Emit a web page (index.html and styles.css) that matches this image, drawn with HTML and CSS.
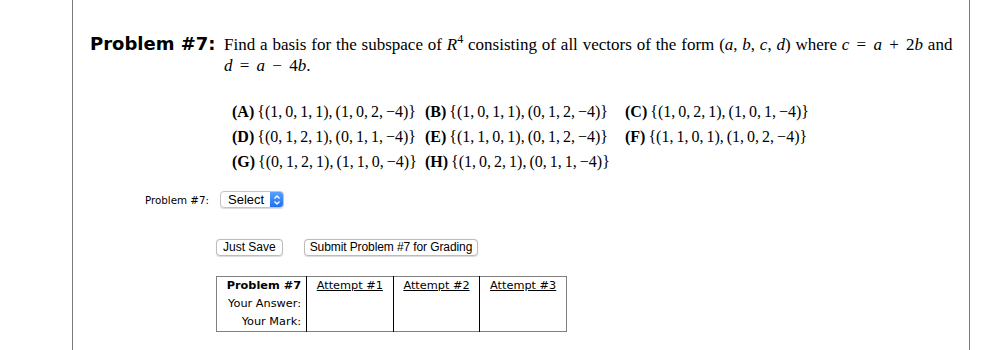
FILE: index.html
```html
<!DOCTYPE html>
<html>
<head>
<meta charset="utf-8">
<link rel="stylesheet" href="styles.css">
</head>
<body>
<div class="page">
  <div class="problem">
    <div class="ptitle">Problem #7:</div>
    <div class="ptext">
      <p class="question">Find a basis for the subspace of <i>R</i><sup>4</sup> consisting of all vectors of the form <span class="tup">(<i>a</i>, <i>b</i>, <i>c</i>, <i>d</i>)</span> where <span class="eq"><i>c</i> = <i>a</i> + 2<i>b</i></span> and <span class="eq"><i>d</i> = <i>a</i> − 4<i>b</i></span>.</p>
      <div class="options">
        <div class="opt"><b>(A)</b> {(1, 0, 1, 1), (1, 0, 2, −4)}</div>
        <div class="opt"><b>(B)</b> {(1, 0, 1, 1), (0, 1, 2, −4)}</div>
        <div class="opt"><b>(C)</b> {(1, 0, 2, 1), (1, 0, 1, −4)}</div>
        <div class="opt"><b>(D)</b> {(0, 1, 2, 1), (0, 1, 1, −4)}</div>
        <div class="opt"><b>(E)</b> {(1, 1, 0, 1), (0, 1, 2, −4)}</div>
        <div class="opt"><b>(F)</b> {(1, 1, 0, 1), (1, 0, 2, −4)}</div>
        <div class="opt"><b>(G)</b> {(0, 1, 2, 1), (1, 1, 0, −4)}</div>
        <div class="opt"><b>(H)</b> {(1, 0, 2, 1), (0, 1, 1, −4)}</div>
      </div>
    </div>
  </div>
  <div class="answer-row">
    <span class="label">Problem #7:</span>
    <div class="select">
      <span class="sel-text">Select</span>
      <span class="sel-arrow">
        <svg width="8" height="12" viewBox="0 0 8 12"><path d="M1.5 4.5 L4 2 L6.5 4.5 M1.5 7.5 L4 10 L6.5 7.5" fill="none" stroke="#fff" stroke-width="1.3"/></svg>
      </span>
    </div>
  </div>
  <div class="buttons">
    <span class="btn">Just Save</span>
    <span class="btn">Submit Problem #7 for Grading</span>
  </div>
  <table class="attempts">
    <tr><th class="rh">Problem #7</th><td><a>Attempt #1</a></td><td><a>Attempt #2</a></td><td><a>Attempt #3</a></td></tr>
    <tr><td class="rh">Your Answer:</td><td></td><td></td><td></td></tr>
    <tr><td class="rh">Your Mark:</td><td></td><td></td><td></td></tr>
  </table>
</div>
</body>
</html>
```
FILE: styles.css
```css
html, body { margin: 0; padding: 0; background: #fff; }
body { font-family: "Liberation Serif", serif; color: #000; }
.page {
  margin-left: 72px;
  width: 898px;
  height: 350px;
  overflow: hidden;
  border-left: 1px solid #7a7a7a;
  border-right: 1px solid #7a7a7a;
  box-sizing: border-box;
  padding-top: 30px;
}
.problem { display: flex; align-items: flex-start; padding-left: 17px; }
.ptitle {
  font-family: "DejaVu Sans", Verdana, sans-serif;
  font-weight: bold;
  font-size: 18px;
  line-height: 24px;
  padding-top: 2px;
  white-space: nowrap;
  width: 134px;
  flex: none;
}
.ptext { width: 732px; }
.question { margin: 0; font-size: 17px; line-height: 21px; padding-top: 4px; word-spacing: 0.6px; }
.question sup { font-size: 12px; line-height: 0; vertical-align: 7px; }
.tup { word-spacing: 0.5px; }
.eq { word-spacing: 3px; }
.options {
  display: grid;
  grid-template-columns: 193px 200px auto;
  row-gap: 4px;
  margin: 25px 0 0 8px;
  font-size: 16px;
  line-height: 21px;
  word-spacing: -1px;
}
.opt { white-space: nowrap; }
.answer-row { display: flex; align-items: center; margin-top: 19px; padding-left: 72px; }
.label { font-family: "DejaVu Sans", Verdana, sans-serif; font-size: 10.3px; width: 75px; }
.select {
  display: flex; align-items: stretch;
  height: 17px; width: 64px; box-sizing: border-box;
  border: 1px solid #c4c4c4; border-radius: 4px; overflow: hidden;
  font-family: "Liberation Sans", Arial, sans-serif; font-size: 13px;
  box-shadow: 0 0.5px 1px rgba(0,0,0,0.15);
}
.sel-text { flex: 1; padding-left: 7px; line-height: 15px; }
.sel-arrow { width: 13px; background: linear-gradient(#5aa0fb, #1f6ff2); display: flex; align-items: center; justify-content: center; }
.buttons { display: flex; gap: 21px; margin-top: 31px; padding-left: 143px; }
.btn {
  display: inline-block; height: 17px; box-sizing: border-box;
  border: 1px solid #bcbcbc; border-radius: 4px;
  font-family: "Liberation Sans", Arial, sans-serif; font-size: 12px; line-height: 15px;
  padding: 0 6px; background: #fff;
  box-shadow: 0 0.5px 1px rgba(0,0,0,0.15);
}
.btn + .btn { padding: 0 5px; letter-spacing: -0.1px; }
.attempts {
  margin: 20px 0 0 143px;
  border-collapse: collapse;
  border: 1px solid #808080;
  font-family: "DejaVu Sans", Verdana, sans-serif;
  font-size: 11.3px;
  table-layout: fixed;
  width: 351px;
}
.attempts th, .attempts td {
  height: 18px; padding: 0 4px; border-left: 1px solid #000;
  text-align: center; vertical-align: middle; font-weight: normal;
  white-space: nowrap; line-height: 14px;
}
.attempts .rh { text-align: right; border-left: none; width: 80px; padding-right: 5px; }
.attempts th.rh { font-weight: bold; }
.attempts a { text-decoration: underline; color: #000; }
```
